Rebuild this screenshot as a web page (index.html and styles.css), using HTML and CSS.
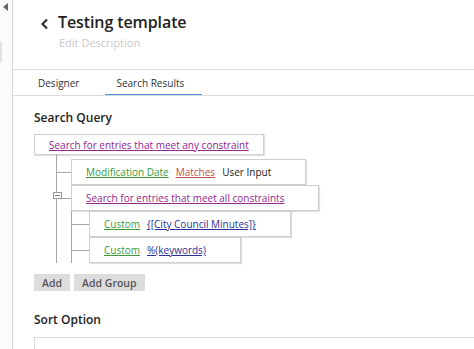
FILE: index.html
```html
<html>
<head>
    <title>Testing template</title>
    <meta charset="UTF-8">
    <link rel="stylesheet" href="styles.css">
</head>
<body>
    <div class="layout">
        <div class="sidebar">
            <span class="collapse-arrow"></span>
            <span class="sidebar-grip"></span>
        </div>

        <div class="main">
            <div class="page-header">
                <svg class="back-icon" width="10" height="12" viewBox="0 0 10 12" fill="none" stroke="#333" stroke-width="2.2">
                    <path d="M7 1.5L2.5 6L7 10.5"/>
                </svg>
                <div>
                    <h1>Testing template</h1>
                    <p>Edit Description</p>
                </div>
            </div>

            <div class="tabs">
                <div class="tab">Designer</div>
                <div class="tab active">Search Results</div>
            </div>

            <div class="content">
                <h2>Search Query</h2>

                <!-- Query tree -->
                <div class="tree">
                    <div class="node root">
                        <a href="#" class="link-purple">Search for entries that meet any constraint</a>
                    </div>
                    <div class="children">
                        <div class="branch">
                            <div class="node">
                                <a href="#" class="link-green">Modification Date</a>
                                <a href="#" class="link-red">Matches</a>
                                <span>User Input</span>
                            </div>
                        </div>
                        <div class="branch">
                            <span class="toggle"></span>
                            <div class="node">
                                <a href="#" class="link-purple">Search for entries that meet all constraints</a>
                            </div>
                            <div class="children inner">
                                <div class="branch">
                                    <div class="node">
                                        <a href="#" class="link-green">Custom</a>
                                        <a href="#" class="link-blue">{[City Council Minutes]}</a>
                                    </div>
                                </div>
                                <div class="branch">
                                    <div class="node">
                                        <a href="#" class="link-green">Custom</a>
                                        <a href="#" class="link-blue">%(keywords)</a>
                                    </div>
                                </div>
                            </div>
                        </div>
                    </div>
                </div>

                <div class="actions">
                    <button type="button" class="btn">Add</button>
                    <button type="button" class="btn">Add Group</button>
                </div>

                <h2 class="sort-title">Sort Option</h2>
                <div class="sort-box"></div>
            </div>
        </div>
    </div>
</body>
</html>
```

FILE: styles.css
```css
:root {
    --text-primary: #222;
    --border: #dcdcdc;
    --tree-line: #a8a8a8;
}

body {
    margin: 0;
    font-family: 'Open Sans', sans-serif;
    color: var(--text-primary);
    background: white;
    overflow: hidden;
}

.layout {
    display: flex;
    height: 100vh;
}

.sidebar {
    width: 12px;
    border-right: 1px solid #d6d6d6;
    background: #fbfbfb;
    display: flex;
    flex-direction: column;
    align-items: flex-start;
}

.collapse-arrow {
    margin: 3px 0 0 3px;
    width: 0;
    height: 0;
    border-top: 4px solid transparent;
    border-bottom: 4px solid transparent;
    border-right: 5px solid #666;
}

.sidebar-grip {
    margin-top: 30px;
    width: 2px;
    height: 22px;
    background: #e2e2e2;
}

.main {
    flex: 1;
    overflow: hidden;
}

/* Header */
.page-header {
    display: flex;
    align-items: flex-start;
    gap: 8px;
    padding: 11px 0 0 27px;
    height: 58px;
    border-bottom: 1px solid var(--border);
}

.back-icon {
    margin-top: 7px;
}

.page-header h1 {
    margin: 0;
    font-size: 16px;
    font-weight: 600;
    line-height: 23px;
    letter-spacing: -0.1px;
    color: #222;
}

.page-header p {
    margin: 1px 0 0 1px;
    font-size: 11px;
    color: #c8c8c8;
}

/* Tabs */
.tabs {
    display: flex;
    height: 25px;
    padding-left: 14px;
    border-bottom: 1px solid var(--border);
}

.tab {
    font-size: 10px;
    line-height: 26px;
    padding: 0 11px;
    color: #333;
}

.tab + .tab {
    margin-left: 15px;
}

.tab.active {
    border-bottom: 1px solid #4a90d9;
    padding: 0 18px 0 11px;
}

/* Content */
.content {
    padding: 13px 0 0 21px;
}

h2 {
    margin: 0 0 8px 0;
    font-size: 12px;
    font-weight: 600;
}

.tree {
    font-size: 10px;
}

.node {
    display: inline-flex;
    align-items: center;
    gap: 7px;
    height: 24px;
    padding: 0 34px 0 14px;
    border: 1px solid #cfcfcf;
    box-shadow: 1px 1px 1px rgba(0, 0, 0, 0.12);
    background: white;
    white-space: nowrap;
}

.node.root {
    height: 19px;
    padding-right: 14px;
}

.children {
    margin-left: 22px;
    padding-top: 4px;
    border-left: 1px solid var(--tree-line);
    width: max-content;
}

.children.inner {
    margin-left: 0;
    padding-top: 0;
}

.branch {
    position: relative;
    padding-left: 14px;
}

.children.inner .branch {
    padding-left: 17px;
}

.branch > .node {
    position: relative;
}

.branch > .node::before {
    content: "";
    position: absolute;
    right: 100%;
    top: 12px;
    width: 15px;
    border-top: 1px solid var(--tree-line);
    margin-right: 1px;
}

.children.inner .branch > .node::before {
    width: 18px;
}

.toggle {
    position: absolute;
    left: -4px;
    top: 7px;
    width: 7px;
    height: 5px;
    border: 1px solid #999;
    background: white;
    z-index: 1;
}

.toggle::after {
    content: "";
    position: absolute;
    left: 1px;
    right: 1px;
    top: 2px;
    border-top: 1px solid #777;
}

.link-purple {
    color: #92278f;
}

.link-green {
    color: #3a9a3a;
}

.link-red {
    color: #c0504d;
}

.link-blue {
    color: #2b2f9c;
}

.actions {
    display: flex;
    gap: 4px;
    margin-top: 11px;
}

.btn {
    font-family: inherit;
    font-size: 10.5px;
    font-weight: 600;
    color: #555;
    background: #dcdcdc;
    border: none;
    padding: 0 8px;
    height: 17px;
}

.sort-title {
    margin-top: 20px;
    margin-bottom: 9px;
}

.sort-box {
    height: 30px;
    border-top: 1px solid var(--border);
    border-left: 1px solid var(--border);
}
```
